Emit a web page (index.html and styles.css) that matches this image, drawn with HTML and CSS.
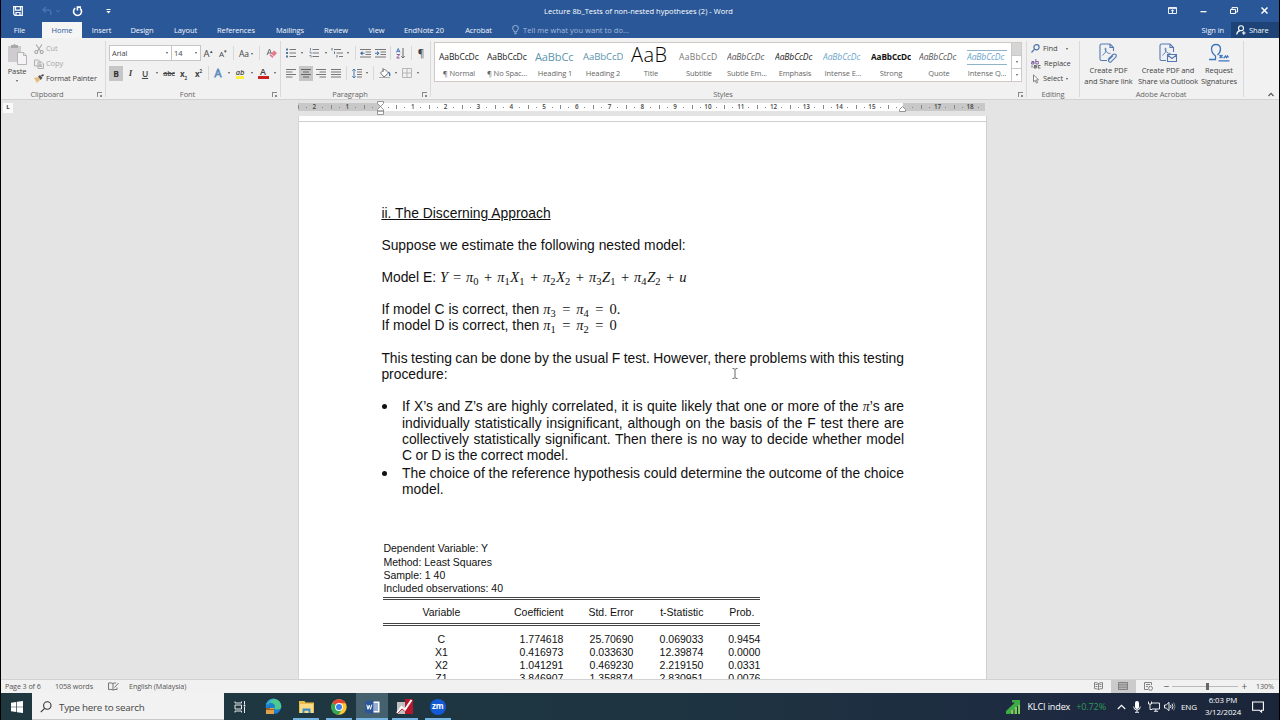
FILE: index.html
```html
<!DOCTYPE html>
<html lang="en">
<head>
    <meta charset="UTF-8">
    <meta name="viewport" content="width=device-width, initial-scale=1.0">
    <title>Lecture 8b_Tests of non-nested hypotheses (2) - Word</title>
    <link rel="stylesheet" href="styles.css">
</head>
<body>
    <header class="titlebar">
        <div class="quick">
            <svg width="10" height="10" viewBox="0 0 10 10" fill="none" stroke="#fff" stroke-width="1.2"><path d="M.7.7h8.6v8.6H2L.7 8zM2.5 1v3.2h5V1M3 9V6.5h4V9"/></svg>
            <svg class="undo" width="20" height="10" viewBox="0 0 20 10" fill="none" stroke="#4b75b5" stroke-width="1.3"><path d="M4 1 1 3.8 4 6.5M1.3 3.8H6q3 0 3 3.2V9"/><path d="M14 4l2 2 2-2" stroke-width="1"/></svg>
            <svg width="11" height="11" viewBox="0 0 11 11" fill="none" stroke="#fff" stroke-width="1.6"><path d="M3.2 2.2A4 4 0 1 0 8 2.3"/><path d="M5.4 4.4V1.1H9" /></svg>
            <svg class="more" width="5" height="5" viewBox="0 0 5 5"><path d="M.5 0h4v1h-4zM.3 2h4.4L2.5 4.4z" fill="#fff"/></svg>
        </div>
        <h1 class="doc-title">Lecture 8b_Tests of non-nested hypotheses (2) - Word</h1>
        <div class="win-btns">
            <svg width="9" height="7" viewBox="0 0 9 7" fill="none" stroke="#fff"><path d="M.5.5h8v6h-8zM.5 1.6h8M4.5 6V3M3 4.2 4.5 2.8 6 4.2" stroke-width=".9"/></svg>
            <svg width="7" height="7" viewBox="0 0 7 7"><path d="M.5 4h6v1.3h-6z" fill="#fff"/></svg>
            <svg width="8" height="7" viewBox="0 0 8 7" fill="none" stroke="#fff" stroke-width="1"><path d="M.5 2.5h5v4h-5zM2 2V.6h5.5V5H6"/></svg>
            <svg width="7" height="7" viewBox="0 0 7 7" stroke="#fff" stroke-width="1.5"><path d="M.5.5l6 6M6.5.5l-6 6"/></svg>
        </div>
    </header>

    <nav class="tabs">
        <span class="tab file">File</span>
        <span class="tab home">Home</span>
        <span class="tab insert">Insert</span>
        <span class="tab design">Design</span>
        <span class="tab layout">Layout</span>
        <span class="tab refs">References</span>
        <span class="tab mail">Mailings</span>
        <span class="tab review">Review</span>
        <span class="tab view">View</span>
        <span class="tab endnote">EndNote 20</span>
        <span class="tab acrobat">Acrobat</span>
        <span class="tell">
            <svg width="7" height="10" viewBox="0 0 7 10" fill="none" stroke="#a9c0e2" stroke-width=".9"><path d="M2.2 7V5.8Q.6 4.8.6 3.3a2.9 2.9 0 0 1 5.8 0Q6.4 4.8 4.8 5.8V7zM2.3 8.7h2.4"/></svg>
            Tell me what you want to do...
        </span>
        <span class="signin">Sign in</span>
        <span class="share">
            <svg width="10" height="10" viewBox="0 0 10 10" fill="none" stroke="#fff" stroke-width="1.1"><circle cx="5" cy="3.2" r="2.5"/><path d="M.7 9.5Q1 6.3 4 5.6M6 8h3.6M7.8 6.2v3.6"/></svg>
            Share
        </span>
    </nav>

    <section class="ribbon">
        <div class="group clipboard">
            <div class="tools">
                <div class="paste">
                    <svg width="20" height="22" viewBox="0 0 20 22"><path d="M1 3h13v16H1z" fill="#cfcccf"/><path d="M4 2h2.5Q7.5-.5 8.500 2H11v3H4z" fill="#a9a9a9"/><path d="M10.500 9.500h6l3 3v9h-9z" fill="#f5f3f5" stroke="#b5b5b5"/><path d="M16.500 9.500v3h3" fill="none" stroke="#b5b5b5"/></svg>
                    <span>Paste</span>
                    <i class="caret"></i>
                </div>
                <div class="clip-list">
                    <span class="off"><svg width="10" height="10" viewBox="0 0 10 10" fill="none" stroke="#a5a5a5" stroke-width="1.1"><path d="M2 .5 6.500 7M8 .5 3.500 7"/><circle cx="2.300" cy="8" r="1.500"/><circle cx="7.700" cy="8" r="1.500"/></svg>Cut</span>
                    <span class="off"><svg width="10" height="10" viewBox="0 0 10 10" fill="#eee" stroke="#b0b0b0"><path d="M.5 1h4l1.500 1.500V7H.5zM4 3h3.500l2 2v4.500H4zM5.300 6h3M5.300 7.500h3"/></svg>Copy</span>
                    <span><svg width="10" height="9" viewBox="0 0 10 9"><path d="M0 4 4 3l2 3-3 3z" fill="#e8bd78"/><path d="M4 2.500 6 1l2.500 3-2 2z" fill="#555"/><path d="M7 1.500 9 0l1 1.300-2 1.500z" fill="#444"/></svg>Format Painter</span>
                </div>
            </div>
            <div class="caption">Clipboard<b class="launch"></b></div>
        </div>

        <div class="group font">
            <div class="tools rows">
                <div class="font-row1">
                    <span class="combo">Arial<i class="caret"></i></span>
                    <span class="combo">14<i class="caret"></i></span>
                    <span class="grow">A<sup>&#9652;</sup></span>
                    <span class="shrink">A<sup>&#9662;</sup></span>
                    <i class="sep"></i>
                    <span class="aa">Aa <i class="caret"></i></span>
                    <i class="sep"></i>
                    <svg width="11" height="11" viewBox="0 0 11 11"><path d="M1 7 3.500 1 6 7M2 5h3" fill="none" stroke="#6b6b6b"/><path d="M3.500 7.500 8 2.500l3 2.500-4.500 5z" fill="#e4798c"/><path d="M5 6l3 2.600" stroke="#fff" stroke-width=".7"/></svg>
                </div>
                <div class="font-row2">
                    <span class="on bold">B</span>
                    <span class="ital">I</span>
                    <span class="under">U</span>
                    <i class="caret"></i>
                    <span class="strike">abc</span>
                    <span class="sx">x<sub>2</sub></span>
                    <span class="sx">x<sup>2</sup></span>
                    <i class="sep"></i>
                    <span class="effect">A</span>
                    <i class="caret"></i>
                    <span class="hilite">ab</span>
                    <i class="caret"></i>
                    <span class="fcolor">A</span>
                    <i class="caret"></i>
                </div>
            </div>
            <div class="caption">Font<b class="launch"></b></div>
        </div>

        <div class="group para">
            <div class="tools rows">
                <div class="para-row1">
                    <svg width="10" height="10" viewBox="0 0 10 10"><path d="M0 .5h2v2H0zM0 4h2v2H0zM0 7.500h2v2H0z" fill="#54779f"/><path d="M3.500 1.500H10M3.500 5H10M3.500 8.500H10" stroke="#777"/></svg>
                    <i class="caret"></i>
                    <svg width="10" height="10" viewBox="0 0 10 10"><path d="M1.500 0v2.500M.5 4h1.500v2M.5 7.500h1.500v2.200" stroke="#54779f" fill="none" stroke-width=".8"/><path d="M3.500 1.500H10M3.500 5H10M3.500 8.500H10" stroke="#777"/></svg>
                    <i class="caret"></i>
                    <svg width="12" height="10" viewBox="0 0 12 10"><path d="M1 0v2.500M3.500 3.500v2.500M6 7v2.500" stroke="#54779f"/><path d="M3 1.500h7M5.500 5H12M8 8.500h4" stroke="#777"/></svg>
                    <i class="caret"></i>
                    <i class="sep"></i>
                    <svg width="11" height="9" viewBox="0 0 11 9"><path d="M0 .5h11M5.500 3H11M5.500 5.500H11M0 8h11" stroke="#777"/><path d="M0 4.300 2.500 2v4.600zM2 3.800h2.500v1H2z" fill="#3b6ba5"/></svg>
                    <svg width="11" height="9" viewBox="0 0 11 9"><path d="M0 .5h11M5.500 3H11M5.500 5.500H11M0 8h11" stroke="#777"/><path d="M4.500 4.300 2 2v4.600zM0 3.800h2.500v1H0z" fill="#3b6ba5"/></svg>
                    <i class="sep"></i>
                    <svg width="9" height="11" viewBox="0 0 9 11" fill="none"><path d="M.5 4.500 2.200.5 4 4.500M1 3.300h2.500" stroke="#4b7bb5"/><path d="M.7 6.500h3L.7 10h3" stroke="#87589a"/><path d="M7 0v10M5.300 8.300 7 10l1.700-1.700" stroke="#666"/></svg>
                    <i class="sep"></i>
                    <span class="pilcrow">&#182;</span>
                </div>
                <div class="para-row2">
                    <svg width="10" height="9" viewBox="0 0 10 9" stroke="#777"><path d="M0 .5h10M0 3h6.500M0 5.500h10M0 8h6.500"/></svg>
                    <span class="on"><svg width="10" height="9" viewBox="0 0 10 9" stroke="#666"><path d="M0 .5h10M2 3h6M0 5.500h10M2 8h6"/></svg></span>
                    <svg width="10" height="9" viewBox="0 0 10 9" stroke="#777"><path d="M0 .5h10M3.500 3H10M0 5.500h10M3.500 8H10"/></svg>
                    <svg width="10" height="9" viewBox="0 0 10 9" stroke="#777"><path d="M0 .5h10M0 3h10M0 5.500h10M0 8h10"/></svg>
                    <i class="sep"></i>
                    <svg width="10" height="11" viewBox="0 0 10 11" fill="none"><path d="M2 1v9M.3 2.700 2 1l1.700 1.700M.3 8.300 2 10l1.700-1.700" stroke="#4b7bb5"/><path d="M5 1.500h5M5 4h5M5 6.500h5M5 9h5" stroke="#777"/></svg>
                    <i class="caret"></i>
                    <i class="sep"></i>
                    <svg width="12" height="11" viewBox="0 0 12 11"><path d="M1.500 5 5.500 1l4 4-4.500 4z" fill="#fff" stroke="#777"/><path d="M4 0v4" stroke="#777"/><path d="M9.500 4q2 2 1 4" fill="none" stroke="#3b6ba5" stroke-width="1.300"/><path d="M0 9.500h11" stroke="#aaa"/></svg>
                    <i class="caret"></i>
                    <svg width="10" height="10" viewBox="0 0 10 10" fill="none" stroke="#b5b5b5"><path d="M.5.5h9v9h-9zM5 0v10M0 5h10"/></svg>
                    <i class="caret"></i>
                </div>
            </div>
            <div class="caption">Paragraph<b class="launch"></b></div>
        </div>

        <div class="group styles">
            <div class="gallery">
                <div class="style"><b class="pv">AaBbCcDc</b><span>&#182; Normal</span></div>
                <div class="style"><b class="pv">AaBbCcDc</b><span>&#182; No Spac...</span></div>
                <div class="style"><b class="pv h1">AaBbCc</b><span>Heading 1</span></div>
                <div class="style"><b class="pv h2">AaBbCcD</b><span>Heading 2</span></div>
                <div class="style"><b class="pv ttl">AaB</b><span>Title</span></div>
                <div class="style"><b class="pv subt">AaBbCcD</b><span>Subtitle</span></div>
                <div class="style"><b class="pv it soft">AaBbCcDc</b><span>Subtle Em...</span></div>
                <div class="style"><b class="pv it">AaBbCcDc</b><span>Emphasis</span></div>
                <div class="style"><b class="pv it blue">AaBbCcDc</b><span>Intense E...</span></div>
                <div class="style"><b class="pv strong">AaBbCcDc</b><span>Strong</span></div>
                <div class="style"><b class="pv it soft">AaBbCcDc</b><span>Quote</span></div>
                <div class="style"><b class="pv it blue lined">AaBbCcDc</b><span>Intense Q...</span></div>
                <div class="scroll">
                    <span class="off-btn"></span>
                    <span><i class="caret"></i></span>
                    <span class="expand"><i class="caret"></i></span>
                </div>
            </div>
            <div class="caption">Styles<b class="launch"></b></div>
        </div>

        <div class="group editing">
            <div class="tools">
                <div class="edit-list">
                    <span><svg width="9" height="9" viewBox="0 0 9 9" fill="none" stroke="#4b75a8" stroke-width="1.200"><circle cx="5.500" cy="3.300" r="2.600"/><path d="M3.600 5.200.5 8.500"/></svg>Find<i class="caret far"></i></span>
                    <span><svg width="10" height="10" viewBox="0 0 10 10" fill="none" stroke="#76589a" stroke-width=".9"><path d="M.5 2.500h2.500V5H.5V3.700h2.500M4.800 0v5h2.500V2.500H4.800"/><path d="M3 6.500h2.300V9H3V7.700h2.300M9.500 6.500H7.200V9h2.300M1 6.500v2" stroke="#555"/></svg>Replace</span>
                    <span><svg width="9" height="10" viewBox="0 0 9 10" fill="#fff" stroke="#777" stroke-width=".9"><path d="M2.500.8v7l1.700-1.500 1.200 2.800 1.200-.5-1.200-2.700h2.100z"/></svg>Select<i class="caret"></i></span>
                </div>
            </div>
            <div class="caption">Editing</div>
        </div>

        <div class="group adobe">
            <div class="tools">
                <div class="big b1">
                    <svg width="19" height="20" viewBox="0 0 19 20" fill="none" stroke="#5379b5" stroke-width="1.100"><path d="M14.500 8V4.500L11 1H2.500Q1 1 1 2.500V16q0 1.500 1.500 1.500H8M11 1v3.500h3.500"/><path d="M3.500 12.500Q8 9 7 5.500 6 4.500 6 6q1 4.500 5.500 4.500" stroke-width=".9"/><path d="M9 16.500l5-5q1.500-1 2.700 0t0 2.700l-4.500 4.500q-1.300 1-2.200 0t0-2l4-4"/></svg>
                    <span>Create PDF<br>and Share link</span>
                </div>
                <div class="big b2">
                    <svg width="19" height="20" viewBox="0 0 19 20" fill="none" stroke="#5379b5" stroke-width="1.100"><path d="M14.500 9V4.500L11 1H2.500Q1 1 1 2.500V16q0 1.500 1.500 1.500H7M11 1v3.500h3.500"/><path d="M3.500 12.500Q8 9 7 5.500 6 4.500 6 6q1 4.500 5.500 4.500" stroke-width=".9"/><path d="M8.500 11.500h9v7h-9zM8.500 12l4.500 3.500 4.500-3.500"/></svg>
                    <span>Create PDF and<br>Share via Outlook</span>
                </div>
                <div class="big b3">
                    <svg width="22" height="20" viewBox="0 0 22 20" fill="none" stroke="#3d74c0" stroke-width="1.300"><path d="M1 16.500h6.500V13Q3.500 10 3.500 5.500 4 1.500 8 1.500t4.500 4q0 4-3 6.500"/><path d="M10.500 17.800h11M11.500 12l3 3M14.500 12l-3 3M15.500 14.500h1l1-1.500 1 1.500 1-1.500 1 1.500"/></svg>
                    <span>Request<br>Signatures</span>
                </div>
            </div>
            <div class="caption">Adobe Acrobat</div>
        </div>
        <svg class="collapse" width="6" height="5" viewBox="0 0 6 5" fill="none" stroke="#555" stroke-width="1.200"><path d="M.5 4 3 1.300 5.500 4"/></svg>
    </section>

    <main class="workspace">
        <div class="ruler-bar">
            <span class="tabstop">L</span>
            <div class="ruler">
                <span>2</span><span>1</span><span></span><span>1</span><span>2</span><span>3</span><span>4</span><span>5</span><span>6</span><span>7</span><span>8</span><span>9</span><span>10</span><span>11</span><span>12</span><span>13</span><span>14</span><span>15</span><span></span><span>17</span><span>18</span>
                <svg class="mark-left" width="7" height="14" viewBox="0 0 7 14" fill="#fff" stroke="#8a8a8a" stroke-width=".9"><path d="M.5.5h6v2L3.500 5.500.5 2.500zM3.500 5.500l3 3v1.500h-6V8.500zM.5 10h6v3.500h-6z"/></svg>
                <svg class="mark-right" width="7" height="6" viewBox="0 0 7 6" fill="#fff" stroke="#8a8a8a" stroke-width=".9"><path d="M3.500.5l3 3v2h-6v-2z"/></svg>
            </div>
        </div>
        <div class="page">
            <div class="page-edge"></div>
            <article class="doc">
                <p><u>ii. The Discerning Approach</u></p>
                <p>Suppose we estimate the following nested model:</p>
                <p class="model">Model E: <span class="math"><i>Y</i> = <i>π</i><sub>0</sub> + <i>π</i><sub>1</sub><i>X</i><sub>1</sub> + <i>π</i><sub>2</sub><i>X</i><sub>2</sub> + <i>π</i><sub>3</sub><i>Z</i><sub>1</sub> + <i>π</i><sub>4</sub><i>Z</i><sub>2</sub> + <i>u</i></span></p>
                <p class="cases">If model C is correct, then <span class="math cond"><i>π</i><sub>3</sub> = <i>π</i><sub>4</sub> = 0.</span><br>
                If model D is correct, then <span class="math cond"><i>π</i><sub>1</sub> = <i>π</i><sub>2</sub> = 0</span></p>
                <p class="just">This testing can be done by the usual F test. However, there problems with this testing procedure:</p>
                <ul>
                    <li>If X’s and Z’s are highly correlated, it is quite likely that one or more of the <i class="pi">π</i>’s are individually statistically insignificant, although on the basis of the F test there are collectively statistically significant. Then there is no way to decide whether model C or D is the correct model.</li>
                    <li>The choice of the reference hypothesis could determine the outcome of the choice model.</li>
                </ul>
                <div class="output">
                    <div class="meta">Dependent Variable: Y<br>Method: Least Squares<br>Sample: 1 40<br>Included observations: 40</div>
                    <table>
                        <thead>
                            <tr><th class="c-var">Variable</th><th class="c-coef">Coefficient</th><th class="c-num">Std. Error</th><th class="c-num">t-Statistic</th><th class="c-prob">Prob.</th></tr>
                        </thead>
                        <tbody>
                            <tr><td>C</td><td>1.774618</td><td>25.70690</td><td>0.069033</td><td>0.9454</td></tr>
                            <tr><td>X1</td><td>0.416973</td><td>0.033630</td><td>12.39874</td><td>0.0000</td></tr>
                            <tr><td>X2</td><td>1.041291</td><td>0.469230</td><td>2.219150</td><td>0.0331</td></tr>
                            <tr><td>Z1</td><td>3.846907</td><td>1.358874</td><td>2.830951</td><td>0.0076</td></tr>
                        </tbody>
                    </table>
                </div>
            </article>
        </div>
        <svg class="ibeam" width="6" height="11" viewBox="0 0 6 11" fill="none" stroke="#555" stroke-width=".9"><path d="M.5.5Q3 .5 3 1.500V9.500Q3 10.500.5 10.500M5.500.5Q3 .5 3 1.500M3 9.500Q3 10.500 5.500 10.500"/></svg>
    </main>

    <div class="statusbar">
        <span class="pg">Page 3 of 6</span>
        <span class="words">1058 words</span>
        <svg class="proof" width="11" height="9" viewBox="0 0 11 9" fill="none" stroke="#666" stroke-width=".9"><path d="M5 1.500Q3 .5.5 1v6.500Q3 7 5 8V1.500Q6.500.7 8 1M5 8q2-.8 4-.5V5.500M6.500 5.500l4-4.500"/></svg>
        <span>English (Malaysia)</span>
        <div class="views">
            <svg width="9" height="8" viewBox="0 0 9 8" fill="none" stroke="#777" stroke-width=".9"><path d="M4.500 1.500Q3 .5.5.6v6q2.500 0 4 1 1.500-1 4-1v-6Q6 .5 4.500 1.500v6M1.500 2.500h2M1.500 4.500h2M5.500 2.500h2M5.500 4.500h2"/></svg>
            <span class="print"><svg width="10" height="8" viewBox="0 0 10 8" fill="none" stroke="#777" stroke-width=".9"><path d="M.5.5h9v7h-9zM1 2.200h8M1 4h8M1 5.800h8"/></svg></span>
            <svg width="9" height="9" viewBox="0 0 9 9" fill="none" stroke="#777" stroke-width=".9"><path d="M4 7.500H.5v-7h7V3M2 2.500h4M2 4.500h2"/><circle cx="6.500" cy="6.300" r="2"/></svg>
        </div>
        <div class="zoom"><span>−</span><i class="track"><b></b></i><span>+</span></div>
        <span class="pct">130%</span>
    </div>

    <footer class="taskbar">
        <div class="start"><svg width="12" height="12" viewBox="0 0 12 12" fill="#fff"><path d="M0 1.700 5.300.9v4.800H0zM6 .8 12 0v5.700H6zM0 6.300h5.300v4.800L0 10.300zM6 6.300h6V12l-6-.8z"/></svg></div>
        <div class="search">
            <svg width="12" height="12" viewBox="0 0 12 12" fill="none" stroke="#333" stroke-width="1.100"><circle cx="7.300" cy="4.500" r="3.700"/><path d="M4.600 7.300.8 11.200"/></svg>
            Type here to search
        </div>
        <div class="apps">
            <span class="app"><svg width="12" height="12" viewBox="0 0 12 12" fill="none" stroke="#e5e9ea"><path d="M1 .5V2h6.500V.5M1 11.500V10h6.500v1.500M1 4h6.500v4H1zM10.500 0v3.500M10.500 6v6"/><path d="M9.700 3.800h1.600v1.700H9.700z" fill="#fff" stroke="none"/></svg></span>
            <span class="app"><svg width="17" height="17" viewBox="0 0 17 17"><circle cx="8.500" cy="8.500" r="7.800" fill="#1a80cf"/><path d="M1 6.500A7.800 7.800 0 0 1 16.300 8q.2 3.500-4 3.500-3 0-3-1.500 1.500-1.500.2-3.200Q6 3 1 6.500z" fill="#4ec98f"/><path d="M1 6.500Q4-.5 10 1q-5 .5-6 5.500z" fill="#2ea9dd"/><path d="M5 9q0 5 6 6.500-6 2-9.500-4z" fill="#12529b"/><path d="M1 10h8v6H1z" fill="#e3a04a"/><path d="M1 10h3l1 1h4v1H1z" fill="#9a5f1c"/></svg></span>
            <span class="app run"><svg width="15" height="14" viewBox="0 0 15 14"><path d="M0 1h5.500l1 1.500H15V13H0z" fill="#e9bd4b"/><path d="M1 4h13v9H1z" fill="#f8dd86"/><path d="M3.500 8.500h8V13h-2v-2.300h-4V13h-2z" fill="#408cc5"/></svg></span>
            <span class="app run"><svg width="16" height="16" viewBox="0 0 16 16"><circle cx="8" cy="8" r="7.700" fill="#fbc62f"/><path d="M8 8 1.300 4.100A7.700 7.700 0 0 1 14.700 4.200H8z" fill="#e64434"/><path d="M1.300 4.100A7.700 7.700 0 0 0 7.500 15.700L11 10 8 8z" fill="#33a853"/><circle cx="8" cy="8" r="3.900" fill="#fff"/><circle cx="8" cy="8" r="3" fill="#3d80ea"/></svg></span>
            <span class="app run active"><svg width="15" height="14" viewBox="0 0 15 14"><path d="M7 1.500h7.500v11H7z" fill="#fff"/><path d="M8.500 4h4.500M8.500 6h4.500M8.500 8h4.500M8.500 10h4.500" stroke="#305b9f"/><path d="M0 1.500 8.500 0v14L0 12.500z" fill="#2b579a"/><path d="M1.800 4.700 3 9.300 4.200 5.200 5.500 9.300 6.800 4.700" fill="none" stroke="#fff"/></svg></span>
            <span class="app run"><svg width="18" height="17" viewBox="0 0 18 17"><path d="M1 4h8v12H1z" fill="#bfc1c3"/><path d="M9 1h8v15H9z" fill="#b5182c"/><path d="M1 15 5.500 9l3.500 2.500L15.500 2" fill="none" stroke="#fff" stroke-width="2"/><path d="M1 16 6 11l2.500 2" fill="none" stroke="#cf2b38"/></svg></span>
            <span class="app run zm"><b>zm</b></span>
        </div>
        <div class="tray">
            <svg class="stock" width="15" height="16" viewBox="0 0 15 16"><path d="M0 15V12l9-8.500H6V1h8v8l-2.500-2L4 15z" fill="#3fab47"/><path d="M5 15v-4h2.500v4zM8.500 15V8H11v7zM12 15V6h2v9z" fill="#7fcb59"/></svg>
            <span class="klci">KLCI index</span>
            <span class="gain">+0.72%</span>
            <svg class="up" width="9" height="6" viewBox="0 0 9 6" fill="none" stroke="#fff" stroke-width="1.100"><path d="M.8 5 4.500 1.300 8.200 5"/></svg>
            <svg class="mic" width="8" height="12" viewBox="0 0 8 12"><rect x="2" width="4" height="8" rx="2" fill="#fff"/><path d="M.7 5.500Q.7 9 4 9t3.300-3.500M4 9v2M2 11.300h4" fill="none" stroke="#fff" stroke-width=".9"/></svg>
            <svg class="net" width="12" height="11" viewBox="0 0 12 11" fill="none" stroke="#fff" stroke-width=".9"><path d="M4 2h7.500v6H4M6 10.300h4M7.800 8v2M.5.5v2.500h3V.5M2 3v5.500h2"/></svg>
            <svg class="vol" width="12" height="11" viewBox="0 0 12 11" fill="none" stroke="#fff" stroke-width=".9"><path d="M.5 4h1.700L5 1.300v8.400L2.200 7H.5zM6.500 4q1 1.500 0 3M8 2.700q2 2.800 0 5.600"/><path d="M9.700 1.500q2.700 4 0 8" stroke="#8792a0"/></svg>
            <span class="lang">ENG</span>
            <div class="clock">6:03 PM<br>3/12/2024</div>
            <svg class="notif" width="12" height="12" viewBox="0 0 12 12" fill="none" stroke="#fff" stroke-width="1.100"><path d="M.6 1h10.800v8.300H9.500V11L7.500 9.300H.6z"/></svg>
        </div>
    </footer>
</body>
</html>
```
FILE: styles.css
```css
* {
    box-sizing: border-box;
}

body {
    margin: 0;
    width: 1280px;
    height: 720px;
    overflow: hidden;
    display: flex;
    flex-direction: column;
    border-left: 1px solid #000;
    border-right: 1px solid #000;
    background: #e4e4e4;
    font-family: 'Open Sans', 'Noto Sans', sans-serif;
    font-size: 7.5px;
    letter-spacing: -0.1px;
    color: #444;
    white-space: nowrap;
}

svg {
    display: block;
    flex: none;
}

i {
    font-style: normal;
}

/* title bar */
.titlebar {
    height: 22px;
    flex: none;
    display: grid;
    grid-template-columns: 400px 1fr 402px;
    align-items: center;
    background: #2a5797;
    color: #fff;
}

.quick {
    display: flex;
    align-items: center;
    padding-left: 12px;
}

.undo {
    margin-left: 19px;
}

.undo + svg {
    margin-left: 10px;
}

.more {
    margin-left: 23px;
}

.doc-title {
    margin: 0;
    padding-right: 1px;
    font-size: 7.5px;
    font-weight: 400;
    letter-spacing: 0.02px;
    text-align: center;
}

.win-btns {
    display: flex;
    justify-content: flex-end;
    gap: 23px;
    padding-right: 11px;
    padding-bottom: 2px;
}

/* ribbon tabs */
.tabs {
    height: 16px;
    flex: none;
    display: flex;
    background: #2a5797;
    color: #f2f6fb;
    line-height: 16px;
    text-align: center;
}

.file { width: 41px; padding-right: 4px; }
.home { width: 40px; background: #f5f5f5; color: #2a5797; }
.insert { width: 39px; }
.design { width: 42px; }
.layout { width: 45px; }
.refs { width: 56px; }
.mail { width: 52px; }
.review { width: 40px; }
.view { width: 41px; }
.endnote { width: 54px; }
.acrobat { width: 55px; }

.tell {
    display: flex;
    align-items: center;
    gap: 4px;
    width: 400px;
    padding-left: 6px;
    color: #a4bbdd;
    letter-spacing: 0.05px;
}

.signin {
    margin-left: auto;
    padding-right: 7px;
}

.share {
    display: flex;
    align-items: center;
    gap: 3px;
    width: 48px;
    padding-left: 5px;
    background: #1e4477;
}

/* ribbon */
.ribbon {
    height: 62px;
    flex: none;
    display: flex;
    background: #f1f1f1;
    border-bottom: 1px solid #d2d2d2;
}

.group {
    display: flex;
    flex-direction: column;
    border-right: 1px solid #dadada;
    margin: 3px 0 2px;
}

.clipboard { width: 105px; }
.font { width: 175px; }
.para { width: 150px; }
.styles { width: 596px; }
.editing { width: 53px; }
.adobe { width: 164px; }

.tools {
    height: 47px;
    flex: none;
    display: flex;
}

.rows {
    flex-direction: column;
    padding: 4px 0 0 3px;
    gap: 4px;
}

.caption {
    position: relative;
    text-align: center;
    line-height: 12px;
    color: #666;
}

.clipboard .caption {
    padding-right: 12px;
}

.font .caption,
.para .caption {
    padding-right: 11px;
}

.styles .caption {
    padding-right: 11px;
}

.launch {
    position: absolute;
    right: 3px;
    top: 4px;
    width: 5px;
    height: 5px;
    border-left: 1px solid #888;
    border-top: 1px solid #888;
    background: linear-gradient(#888, #888) 2px 2px / 2px 2px no-repeat;
}

.caret {
    display: inline-block;
    width: 0;
    height: 0;
    border: 1.8px solid transparent;
    border-top: 2.2px solid #555;
    border-bottom: 0;
}

.sep {
    width: 1px;
    height: 14px;
    background: #d8d8d8;
}

.paste {
    width: 33px;
    padding: 2px 2px 0 1px;
    display: flex;
    flex-direction: column;
    align-items: center;
    line-height: 13px;
}

.paste .caret {
    margin-top: 2px;
}

.clip-list,
.edit-list {
    display: flex;
    flex-direction: column;
    line-height: 15px;
}

.clip-list span,
.edit-list span {
    display: flex;
    align-items: center;
    gap: 2px;
}

.clip-list .off {
    color: #a8a8a8;
}

.font-row1,
.font-row2,
.para-row1,
.para-row2 {
    display: grid;
    height: 16px;
    align-items: center;
    justify-items: center;
}

.font-row1 { grid-template-columns: 63px 29px 14px 16px 4px 22px 4px 20px; }
.font-row2 { grid-template-columns: 14px 15px 14px 10px 14px 15px 15px 5px 14px 7px 16px 7px 16px 7px; }
.para-row1 { grid-template-columns: 14px 8px 16px 7px 15px 8px 6px 15px 14px 6px 15px 6px 14px; }
.para-row2 { grid-template-columns: 14px 16px 14px 15px 7px 14px 6px 7px 15px 7px 15px 8px; }

.combo {
    width: 100%;
    height: 16px;
    display: flex;
    align-items: center;
    justify-content: space-between;
    padding: 0 3px 0 2px;
    background: #fff;
    border: 1px solid #c6c6c6;
}

.combo + .combo {
    border-left: 0;
}

.grow { font-size: 9.5px; }
.shrink { font-size: 8px; }

.grow sup,
.shrink sup {
    font-size: 5px;
    line-height: 0;
    vertical-align: 4px;
}

.aa {
    font-size: 8.5px;
}

.aa .caret {
    vertical-align: 2px;
}

.on {
    width: 14px;
    height: 15px;
    display: flex;
    align-items: center;
    justify-content: center;
    background: #c6c6c6;
}

.bold { font-weight: 700; font-size: 8.5px; color: #333; }
.ital { font: italic 700 9px 'Liberation Serif', serif; }
.under { font-weight: 600; font-size: 8.5px; text-decoration: underline; }
.strike { font-weight: 600; font-size: 7px; text-decoration: line-through; }
.sx { font-weight: 700; font-size: 8px; }

.sx sub,
.sx sup {
    font-size: 4.5px;
    line-height: 0;
}

.effect {
    font-size: 11px;
    line-height: 12px;
    color: #fff;
    -webkit-text-stroke: 0.8px #5c8bc0;
}

.hilite {
    font: italic 600 7.5px/8px 'Open Sans', sans-serif;
    border-bottom: 3px solid #fbf03a;
}

.fcolor {
    width: 11px;
    text-align: center;
    font-weight: 600;
    font-size: 9px;
    line-height: 9px;
    border-bottom: 3px solid #c92020;
}

.pilcrow {
    font-size: 10px;
}

.gallery {
    display: flex;
    flex: none;
    width: 588px;
    height: 40px;
    margin: 1px 0 6px 3px;
    background: #fff;
    border: 1px solid #cfc8c4;
}

.style {
    width: 48px;
    height: 38px;
    flex: none;
    display: flex;
    flex-direction: column;
    align-items: center;
    color: #666;
}

.style span {
    line-height: 12px;
}

.pv {
    width: 40px;
    height: 24px;
    overflow: hidden;
    font: 400 8.5px/28px 'Open Sans', 'Noto Sans', sans-serif;
    color: #222;
}

.h1 { font-size: 11px; color: #5c93ad; }
.h2 { font-size: 9.6px; color: #5c93ad; }
.ttl { font-size: 20px; font-weight: 300; line-height: 24px; color: #000; letter-spacing: 0.4px; }
.subt { color: #777; letter-spacing: 0.3px; }
.it { font-style: italic; }
.soft { color: #555; }
.blue { color: #6aa5cc; }
.strong { font-weight: 700; font-size: 8.2px; color: #111; }

.lined {
    background: linear-gradient(#8fb3cb, #8fb3cb) 0 7px / 40px 1px no-repeat, linear-gradient(#8fb3cb, #8fb3cb) 0 21px / 40px 1px no-repeat;
}

.scroll {
    width: 10px;
    display: flex;
    flex-direction: column;
    border-left: 1px solid #c9c9c9;
}

.scroll span {
    flex: 1;
    display: flex;
    align-items: center;
    justify-content: center;
    border-bottom: 1px solid #c9c9c9;
}

.scroll .off-btn {
    background: #d5d5d5;
}

.scroll .expand {
    border-bottom: 0;
}

.expand .caret {
    box-shadow: 0 -3px 0 -1px #555;
}

.edit-list {
    padding-left: 4px;
}

.edit-list span {
    gap: 3px;
}

.edit-list .far {
    margin-left: 5px;
}

.adobe .tools {
    text-align: center;
}

.big {
    display: flex;
    flex-direction: column;
    align-items: center;
    gap: 2px;
    padding-top: 2px;
    line-height: 10.6px;
}

.b1 { width: 57px; }
.b2 { width: 62px; }
.b3 { width: 40px; }

.adobe .caption {
    padding-right: 1px;
}

.collapse {
    margin: 54px 0 0 24px;
}

/* document area */
.workspace {
    position: relative;
    height: 579px;
    flex: none;
    overflow: hidden;
    background: #e4e4e4;
}

.ruler-bar {
    display: flex;
    height: 16px;
    padding-top: 3px;
}

.tabstop {
    width: 10px;
    height: 10px;
    margin-left: 2px;
    background: #fafafa;
    font-size: 6px;
    font-weight: 700;
    line-height: 9px;
    text-align: center;
}

.ruler {
    position: relative;
    display: flex;
    width: 687px;
    height: 8px;
    margin-left: 285px;
    background: linear-gradient(90deg, #c8c8c8 83px, #fff 83px, #fff 605px, #c8c8c8 605px);
    font-size: 6.3px;
    font-weight: 600;
    line-height: 8px;
    letter-spacing: 0;
}

/* one centimetre: half tick on the edge, quarter dots on both sides of the number */
.ruler span {
    width: 32.8px;
    flex: none;
    text-align: center;
    background:
        linear-gradient(#888, #888) 0 2px / 1px 4px no-repeat,
        linear-gradient(#888, #888) 8px 4px / 1px 1px no-repeat,
        linear-gradient(#888, #888) 24px 4px / 1px 1px no-repeat;
}

.ruler span:last-of-type {
    padding-left: 3px;
    width: 30px;
    text-align: left;
    text-indent: 9.5px;
}

.mark-left {
    position: absolute;
    left: 79px;
    top: -2px;
}

.mark-right {
    position: absolute;
    left: 601px;
    top: 3px;
}

.page {
    width: 689px;
    height: 563px;
    margin-left: 297px;
    background: #fff;
    border-left: 1px solid #d5d5d5;
    border-right: 1px solid #cfcfcf;
}

.page-edge {
    height: 6px;
    border-bottom: 1px solid #cfcfcf;
}

.doc {
    width: 605px;
    padding: 83px 0 0 82.4px;
    font-family: 'Liberation Sans', Arial, sans-serif;
    font-size: 13.87px;
    line-height: 16.1px;
    letter-spacing: 0;
    color: #111;
    white-space: normal;
}

.doc p {
    margin: 0 0 16.1px;
}

.doc .model {
    margin-bottom: 15.3px;
}

.doc .cases {
    margin-bottom: 16.9px;
}

.doc .just,
.doc li {
    text-align: justify;
    word-spacing: -0.4px;
}

.math {
    font-family: 'Liberation Serif', 'Times New Roman', serif;
    font-size: 14.5px;
    line-height: 0;
    word-spacing: 1.3px;
}

.cond {
    word-spacing: 2.3px;
}

.math i,
.pi {
    font-family: 'Liberation Serif', 'Times New Roman', serif;
    font-style: italic;
}

.math sub {
    font-size: 10.5px;
    line-height: 0;
    vertical-align: -3px;
    letter-spacing: 0.6px;
}

.doc ul {
    margin: 0;
    padding-left: 20.6px;
    list-style: none;
}

.doc li {
    position: relative;
    margin-bottom: 1.8px;
}

.doc li::before {
    content: '';
    position: absolute;
    left: -20px;
    top: 6px;
    width: 5px;
    height: 5px;
    border-radius: 50%;
    background: #111;
}

.output {
    width: 378px;
    margin: 45px 0 0 2px;
    font-size: 10.5px;
    line-height: 13.1px;
}

.output table {
    width: 377px;
    margin-top: 2px;
    border-collapse: collapse;
    table-layout: fixed;
}

.output th {
    height: 26px;
    padding: 3px 0 0;
    font-weight: 400;
    text-align: right;
    border-top: 3px double #444;
    border-bottom: 3px double #444;
}

.output td {
    padding: 0;
    height: 13px;
    line-height: 13px;
    text-align: right;
}

.output tbody tr:first-child td {
    padding-top: 7px;
}

.output td:first-child,
.output .c-var {
    text-align: center;
}

.c-var { width: 116px; }
.c-coef { width: 64px; }
.c-num { width: 70px; }
.output .c-prob { width: 57px; padding-right: 6px; }

.ibeam {
    position: absolute;
    left: 731px;
    top: 268px;
}

/* status bar */
.statusbar {
    height: 14px;
    flex: none;
    display: flex;
    align-items: center;
    padding: 0 0 1px 4px;
    background: #f1f1f1;
    border-top: 1px solid #d2d2d2;
    font-size: 7.2px;
    color: #555;
}

.pg { width: 50px; }
.words { width: 53px; }
.proof { margin-right: 10px; }

.views {
    display: flex;
    align-items: center;
    margin-left: auto;
    gap: 8px;
}

.print {
    width: 25px;
    height: 13px;
    display: flex;
    align-items: center;
    justify-content: center;
    background: #cbcbcb;
}

.zoom {
    display: flex;
    align-items: center;
    gap: 3px;
    margin-left: 11px;
    font-size: 10px;
    line-height: 12px;
}

.track {
    width: 66px;
    height: 1px;
    background: #bbb;
}

.track b {
    display: block;
    width: 3px;
    height: 7px;
    margin: -3px 0 0 34px;
    background: #666;
}

.pct {
    width: 23px;
    margin-left: 9px;
}

/* taskbar */
.taskbar {
    height: 27px;
    flex: none;
    display: flex;
    align-items: center;
    background: linear-gradient(90deg, #1f3840, #1e3541 50%, #1d2940 85%, #1b2539);
    color: #fff;
}

.start {
    width: 31px;
    display: flex;
    justify-content: center;
}

.search {
    width: 192px;
    height: 27px;
    display: flex;
    align-items: center;
    gap: 7px;
    padding: 2px 0 0 8px;
    background: #f2f2f2;
    border-bottom: 1px solid #c9c9c9;
    color: #444;
    font-size: 9.8px;
    letter-spacing: -0.25px;
}

.apps {
    display: flex;
}

.app {
    width: 32.9px;
    height: 27px;
    display: flex;
    align-items: center;
    justify-content: center;
}

.run {
    background: linear-gradient(#76b5e3, #76b5e3) 50% 100% / 26px 2px no-repeat;
}

.active {
    background: linear-gradient(#76b5e3, #76b5e3) 0 100% / 33px 2px no-repeat, #46616e;
}

.zm b {
    width: 16px;
    height: 16px;
    border-radius: 50%;
    background: #1459d6;
    font-size: 8px;
    line-height: 14px;
    text-align: center;
}

.tray {
    margin-left: auto;
    display: flex;
    align-items: center;
    font-size: 8.5px;
}

.klci { margin-left: 6px; font-size: 9px; }
.gain { margin-left: 6px; font-size: 9px; color: #2f9a55; }
.up { margin-left: 11px; }
.mic { margin-left: 7px; }
.net { margin-left: 7px; }
.vol { margin-left: 4px; }
.lang { margin-left: 5px; width: 16px; font-size: 8px; }

.clock {
    width: 38px;
    margin-left: 7px;
    padding-bottom: 1px;
    font-size: 7.8px;
    line-height: 12px;
    text-align: center;
}

.notif {
    margin: 0 15px 0 10px;
}
```
